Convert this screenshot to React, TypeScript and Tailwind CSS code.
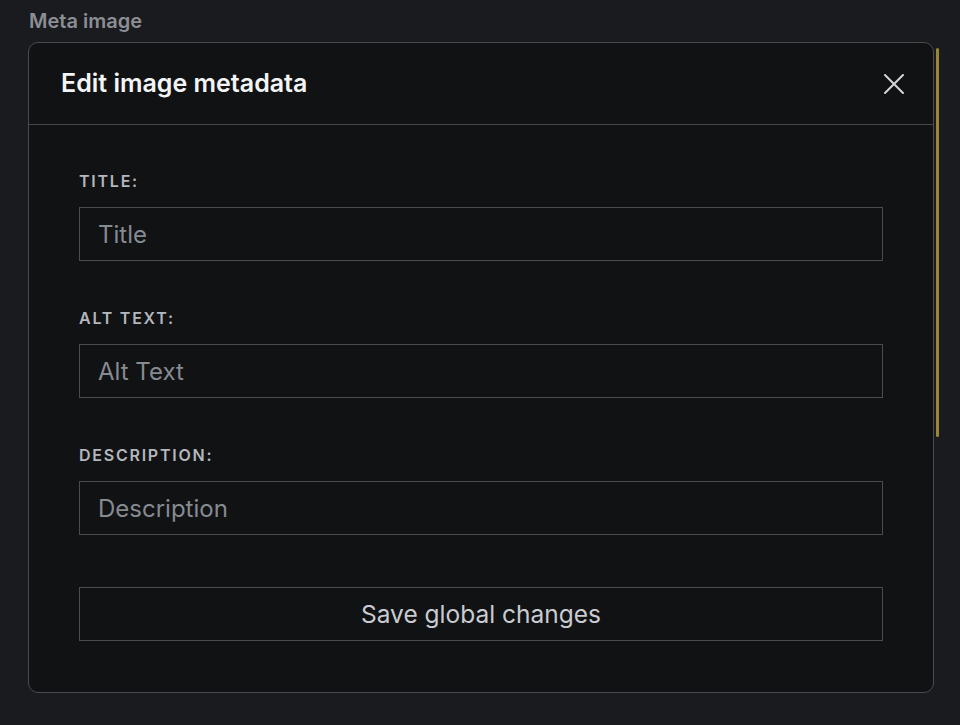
import React from "react";

const font = { fontFamily: "Inter, 'Noto Sans', 'Liberation Sans', sans-serif" };

function Field({ label, placeholder }: { label: string; placeholder: string }) {
  return (
    <div className="flex flex-col">
      <label className="text-[16px] font-semibold tracking-[0.11em] leading-6 text-[#b4b7bd] mb-[14px]">
        {label}
      </label>
      <input
        placeholder={placeholder}
        className="h-[54px] w-full bg-transparent border border-[#4a4c51] px-[18px] text-[24px] text-[#d0d2d6] placeholder:text-[#868a91] outline-none"
      />
    </div>
  );
}

export default function App() {
  return (
    <div className="relative w-[960px] h-[725px] overflow-hidden bg-[#1a1b1e]" style={font}>
      <div className="pl-[29px] pt-[9px] h-[42px] text-[20px] leading-6 font-semibold text-[#8b8e94]">
        Meta image
      </div>
      <div className="ml-[28px] w-[906px] h-[651px] rounded-[10px] border border-[#494b50] bg-[#111214] flex flex-col">
        <div className="h-[82px] shrink-0 border-b border-[#45474c] flex items-center justify-between pl-[32px] pr-[28px]">
          <h2 className="text-[25px] font-semibold text-[#f3f4f6]">Edit image metadata</h2>
          <svg width="22" height="22" viewBox="0 0 22 22" className="text-[#d4d6da]">
            <path d="M2 2 L20 20 M20 2 L2 20" stroke="currentColor" strokeWidth="2" strokeLinecap="round" />
          </svg>
        </div>
        <div className="flex flex-col px-[50px] pt-[44px]">
          <div className="flex flex-col gap-[45px]">
            <Field label="TITLE:" placeholder="Title" />
            <Field label="ALT TEXT:" placeholder="Alt Text" />
            <Field label="DESCRIPTION:" placeholder="Description" />
          </div>
          <button className="mt-[52px] h-[54px] w-full border border-[#4a4c51] text-[24.5px] text-[#c9cbd0]">
            Save global changes
          </button>
        </div>
      </div>
      <div className="absolute left-[936px] top-[48px] w-[3px] h-[389px] rounded-full bg-[#9b8532]" />
    </div>
  );
}
